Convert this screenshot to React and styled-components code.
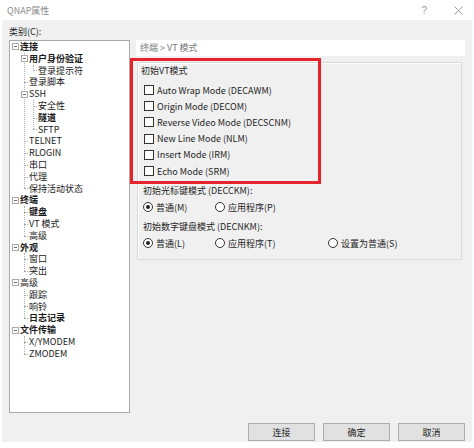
import React from "react";
import styled, { createGlobalStyle } from "styled-components";

const FONT = `"Noto Sans CJK SC", "Noto Sans", sans-serif`;

const GlobalStyle = createGlobalStyle`
    html, body {
        margin: 0;
        padding: 0;
        background: #ffffff;
    }
    body {
        font-family: ${FONT};
        font-size: 9px;
        color: #1e1e1e;
    }
`;

const tree = [
    {
        t: "连接",
        b: true,
        c: [
            { t: "用户身份验证", b: true, c: [{ t: "登录提示符" }] },
            { t: "登录脚本" },
            { t: "SSH", c: [{ t: "安全性" }, { t: "隧道", b: true }, { t: "SFTP" }] },
            { t: "TELNET" },
            { t: "RLOGIN" },
            { t: "串口" },
            { t: "代理" },
            { t: "保持活动状态" },
        ],
    },
    { t: "终端", b: true, c: [{ t: "键盘", b: true }, { t: "VT 模式" }, { t: "高级" }] },
    { t: "外观", b: true, c: [{ t: "窗口" }, { t: "突出" }] },
    { t: "高级", c: [{ t: "跟踪" }, { t: "响铃" }, { t: "日志记录", b: true }] },
    { t: "文件传输", b: true, c: [{ t: "X/YMODEM" }, { t: "ZMODEM" }] },
];

const vtModes = [
    "Auto Wrap Mode (DECAWM)",
    "Origin Mode (DECOM)",
    "Reverse Video Mode (DECSCNM)",
    "New Line Mode (NLM)",
    "Insert Mode (IRM)",
    "Echo Mode (SRM)",
];

const TreeNode = ({ node, level }) => (
    <>
        <Row $level={level}>
            <Joint $leaf={!node.c} $level={level}>
                {node.c && <Expander />}
            </Joint>
            <NodeLabel $bold={node.b}>{node.t}</NodeLabel>
        </Row>
        {node.c && (
            <Children $level={level + 1}>
                {node.c.map((child) => (
                    <TreeNode key={child.t} node={child} level={level + 1} />
                ))}
            </Children>
        )}
    </>
);

const RadioOption = ({ label, checked, width }) => (
    <Option $width={width}>
        <Radio $checked={checked} />
        {label}
    </Option>
);

const App = () => {
    return (
        <>
            <GlobalStyle />
            <Window>
                <TitleBar>
                    <Title>QNAP属性</Title>
                    <TitleButtons>
                        <Help>?</Help>
                        <svg width="9" height="9" viewBox="0 0 9 9">
                            <path d="M0.5 0.5 L8.5 8.5 M8.5 0.5 L0.5 8.5" stroke="#8a8a8a" strokeWidth="0.9" />
                        </svg>
                    </TitleButtons>
                </TitleBar>
                <Body>
                    <CategoryLabel>类别(C):</CategoryLabel>
                    <Main>
                        <Tree>
                            {tree.map((node) => (
                                <TreeNode key={node.t} node={node} level={0} />
                            ))}
                        </Tree>
                        <Panel>
                            <Crumb>终端 &gt; VT 模式</Crumb>
                            <Frame>
                                <GroupTitle>初始VT模式</GroupTitle>
                                <CheckList>
                                    {vtModes.map((m) => (
                                        <CheckRow key={m}>
                                            <CheckBox />
                                            {m}
                                        </CheckRow>
                                    ))}
                                </CheckList>
                                <Section>
                                    <SectionTitle>初始光标键模式 (DECCKM):</SectionTitle>
                                    <RadioRow>
                                        <RadioOption label="普通(M)" checked width={72} />
                                        <RadioOption label="应用程序(P)" />
                                    </RadioRow>
                                </Section>
                                <Section>
                                    <SectionTitle>初始数字键盘模式 (DECNKM):</SectionTitle>
                                    <RadioRow>
                                        <RadioOption label="普通(L)" checked width={72} />
                                        <RadioOption label="应用程序(T)" width={113} />
                                        <RadioOption label="设置为普通(S)" />
                                    </RadioRow>
                                </Section>
                            </Frame>
                            <Highlight />
                        </Panel>
                    </Main>
                    <Buttons>
                        <Button>连接</Button>
                        <Button>确定</Button>
                        <Button>取消</Button>
                    </Buttons>
                </Body>
            </Window>
        </>
    );
};

const Window = styled.div`
    width: 470px;
    height: 442px;
    margin-left: 2px;
    display: flex;
    flex-direction: column;
    background: #f0f0f0;
`;

const TitleBar = styled.div`
    height: 20px;
    flex: none;
    background: #ffffff;
    display: flex;
    align-items: center;
    justify-content: space-between;
    padding: 0 9px 0 5px;
`;

const Title = styled.span`
    color: #8c8c8c;
    font-size: 9px;
`;

const TitleButtons = styled.div`
    display: flex;
    align-items: center;
    gap: 27px;
`;

const Help = styled.span`
    color: #9a9a9a;
    font-size: 10px;
    font-family: "Liberation Sans", sans-serif;
`;

const Body = styled.div`
    flex: 1;
    display: flex;
    flex-direction: column;
    padding: 6px 7px 1px 7px;
`;

const CategoryLabel = styled.div`
    height: 12px;
    line-height: 12px;
    margin-bottom: 2px;
`;

const Main = styled.div`
    height: 373px;
    display: flex;
    gap: 6px;
`;

const Tree = styled.div`
    width: 119px;
    flex: none;
    background: #ffffff;
    border: 1px solid #a9a9a9;
    overflow: hidden;
`;

const Row = styled.div`
    height: 11.8px;
    display: flex;
    align-items: center;
    padding-left: ${(p) => p.$level * 9}px;
    white-space: nowrap;
`;

const Joint = styled.span`
    position: relative;
    width: 10px;
    height: 100%;
    flex: none;
    display: flex;
    align-items: center;
    justify-content: center;

    &::before {
        content: "";
        display: ${(p) => (p.$leaf && p.$level > 0 ? "block" : "none")};
        position: absolute;
        left: 5px;
        top: 50%;
        width: 4px;
        border-top: 1px dotted #a8a8a8;
    }
`;

const Expander = styled.span`
    position: relative;
    width: 7px;
    height: 7px;
    box-sizing: border-box;
    border: 1px solid #a8a8a8;
    background: #ffffff;

    &::after {
        content: "";
        position: absolute;
        left: 1px;
        right: 1px;
        top: 2px;
        border-top: 1px solid #6a6a6a;
    }
`;

const NodeLabel = styled.span`
    line-height: 11.8px;
    font-weight: ${(p) => (p.$bold ? 700 : 400)};
    color: #1a1a1a;
`;

const Children = styled.div`
    position: relative;

    &::before {
        content: "";
        position: absolute;
        left: ${(p) => 5 + p.$level * 9}px;
        top: 0;
        bottom: 5.9px;
        border-left: 1px dotted #b0b0b0;
        display: ${(p) => (p.$level > 0 ? "block" : "none")};
    }
`;

const Panel = styled.div`
    position: relative;
    flex: 1;
    display: flex;
    flex-direction: column;
`;

const Crumb = styled.div`
    height: 16px;
    line-height: 16px;
    background: #ffffff;
    color: #7a7a7a;
    padding-left: 4px;
`;

const Frame = styled.div`
    margin: 6px 3px 0 1px;
    height: 198px;
    box-sizing: border-box;
    border: 1px solid #d9d9d9;
    box-shadow: inset 1px 1px 0 #ffffff;
    padding: 2px 0 0 3px;
`;

const GroupTitle = styled.div`
    height: 12px;
    line-height: 12px;
`;

const CheckList = styled.div`
    margin-top: 5px;
    padding-left: 3px;
`;

const CheckRow = styled.div`
    height: 16.2px;
    display: flex;
    align-items: center;
    gap: 3px;
    white-space: nowrap;
`;

const CheckBox = styled.span`
    width: 10px;
    height: 10px;
    box-sizing: border-box;
    border: 1px solid #333333;
    background: #ffffff;
    flex: none;
`;

const Section = styled.div`
    margin-top: 6px;
    padding-left: 2px;
`;

const SectionTitle = styled.div`
    height: 12px;
    line-height: 12px;
    margin-bottom: 2px;
`;

const RadioRow = styled.div`
    height: 16px;
    display: flex;
    align-items: center;
`;

const Option = styled.span`
    width: ${(p) => (p.$width ? `${p.$width}px` : "auto")};
    display: flex;
    align-items: center;
    gap: 3px;
    white-space: nowrap;
`;

const Radio = styled.span`
    position: relative;
    width: 10px;
    height: 10px;
    box-sizing: border-box;
    border: 1px solid #333333;
    border-radius: 50%;
    background: #ffffff;
    flex: none;

    &::after {
        content: "";
        display: ${(p) => (p.$checked ? "block" : "none")};
        position: absolute;
        left: 2px;
        top: 2px;
        width: 4px;
        height: 4px;
        border-radius: 50%;
        background: #222222;
    }
`;

const Highlight = styled.div`
    position: absolute;
    left: -6px;
    top: 18px;
    width: 191px;
    height: 126px;
    box-sizing: border-box;
    border: 3px solid #e4232c;
    pointer-events: none;
`;

const Buttons = styled.div`
    margin-top: 10px;
    display: flex;
    justify-content: flex-end;
    gap: 8px;
`;

const Button = styled.button`
    width: 67px;
    height: 18px;
    padding: 0;
    border: 1px solid #adadad;
    background: #e1e1e1;
    font-family: ${FONT};
    font-size: 9px;
    color: #222222;
`;

export default App;
